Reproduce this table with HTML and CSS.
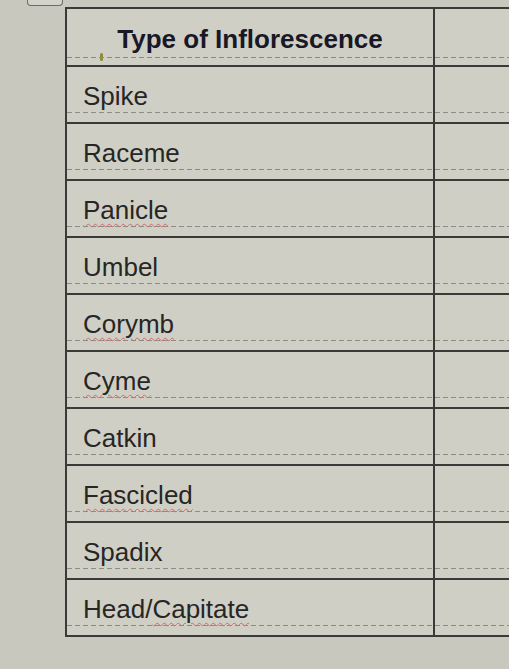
FILE: index.html
```html
<!DOCTYPE html>
<html lang="en">
<head>
<meta charset="utf-8">
<title>Type of Inflorescence</title>
<link rel="stylesheet" href="styles.css">
</head>
<body>
<div class="page">
  <div class="handle"></div>
  <table class="sheet">
    <tr class="head-row">
      <td class="col-name"><div class="cell"><span class="anchor"></span><span class="head-text">Type of Inflorescence</span></div></td>
      <td class="col-blank"><div class="cell"></div></td>
    </tr>
    <tr><td class="col-name"><div class="cell">Spike</div></td><td class="col-blank"><div class="cell"></div></td></tr>
    <tr><td class="col-name"><div class="cell">Raceme</div></td><td class="col-blank"><div class="cell"></div></td></tr>
    <tr><td class="col-name"><div class="cell"><span class="spell">Panicle</span></div></td><td class="col-blank"><div class="cell"></div></td></tr>
    <tr><td class="col-name"><div class="cell">Umbel</div></td><td class="col-blank"><div class="cell"></div></td></tr>
    <tr><td class="col-name"><div class="cell"><span class="spell">Corymb</span></div></td><td class="col-blank"><div class="cell"></div></td></tr>
    <tr><td class="col-name"><div class="cell"><span class="spell">Cyme</span></div></td><td class="col-blank"><div class="cell"></div></td></tr>
    <tr><td class="col-name"><div class="cell">Catkin</div></td><td class="col-blank"><div class="cell"></div></td></tr>
    <tr><td class="col-name"><div class="cell"><span class="spell">Fascicled</span></div></td><td class="col-blank"><div class="cell"></div></td></tr>
    <tr><td class="col-name"><div class="cell">Spadix</div></td><td class="col-blank"><div class="cell"></div></td></tr>
    <tr><td class="col-name"><div class="cell">Head/<span class="spell">Capitate</span></div></td><td class="col-blank"><div class="cell"></div></td></tr>
  </table>
</div>
</body>
</html>
```
FILE: styles.css
```css
html, body {
  margin: 0;
  padding: 0;
  background: #c9c8bf;
  overflow: hidden;
}
.page {
  width: 509px;
  height: 669px;
  overflow: hidden;
  padding-left: 65px;
  box-sizing: border-box;
  font-family: "Liberation Sans", Arial, sans-serif;
}
.handle {
  width: 34px;
  height: 5px;
  margin-left: -38px;
  border: 1px solid #6d6d68;
  border-top: none;
  border-radius: 0 0 4px 4px;
  background: #d4d3cb;
  margin-bottom: 1px;
}
.sheet {
  border-collapse: collapse;
  background: #d0cfc6;
  width: 480px;
  table-layout: fixed;
}
.sheet td {
  padding: 0;
  border: 2px solid #3b3a38;
  vertical-align: top;
  height: 55px;
}
.sheet .col-name {
  width: 366px;
}
.sheet .col-blank {
  border-left-color: #2a2944;
  border-right: none;
  width: 110px;
}
.head-row td {
  height: 56px;
}
.cell {
  position: relative;
  box-sizing: border-box;
  height: 46px;
  padding: 15px 0 0 16px;
  font-size: 26px;
  line-height: 29px;
  color: #262624;
  white-space: nowrap;
}
.cell::after {
  content: "";
  position: absolute;
  left: 0;
  right: 0;
  bottom: 0;
  height: 1px;
  background: repeating-linear-gradient(to right, #8d8c86 0 5px, transparent 5px 8px);
}
.head-row .cell {
  height: 49px;
  padding: 16px 0 0 0;
  text-align: center;
}
.head-text {
  font-weight: bold;
  color: #181826;
}
.anchor {
  position: absolute;
  left: 33px;
  bottom: -3px;
  width: 3px;
  height: 8px;
  border-radius: 2px;
  background: #8f8a3a;
}
.spell {
  text-decoration: underline wavy #cf6b6b;
  text-decoration-thickness: 1px;
  text-underline-offset: 4px;
}
```
